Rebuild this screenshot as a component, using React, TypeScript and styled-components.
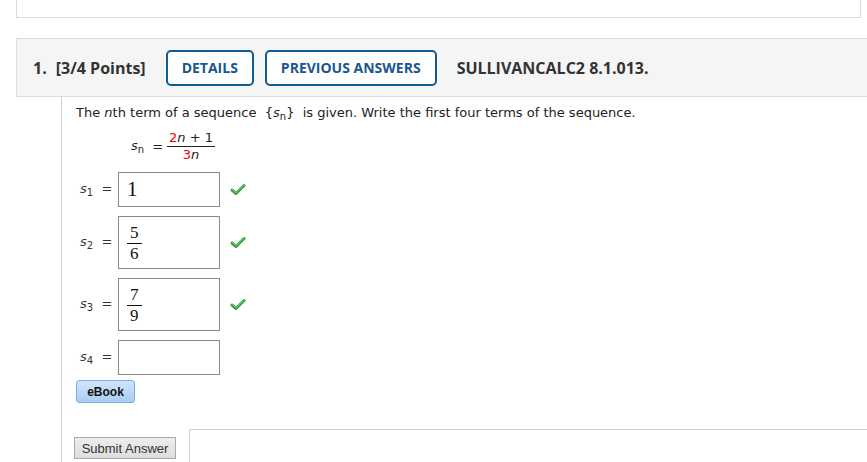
import React from "react";
import styled, { createGlobalStyle } from "styled-components";

const GlobalStyle = createGlobalStyle`
  html, body { margin: 0; padding: 0; background: #fff; }
  body { width: 867px; height: 462px; overflow: hidden; }
`;

const Page = styled.div`
  width: 867px;
  height: 462px;
  overflow: hidden;
  font-family: "DejaVu Sans", Verdana, sans-serif;
  color: #222;
`;

const PrevCard = styled.div`
  height: 17px;
  margin: 0 6px 0 16px;
  border: 1px solid #dcdcdc;
  border-top: none;
`;

const Question = styled.div`
  margin: 20px 0 0 16px;
`;

const Header = styled.div`
  height: 57px;
  display: flex;
  align-items: center;
  background: #f5f5f5;
  border: 1px solid #dcdcdc;
  border-right: none;
  padding-left: 16px;
  font-family: "Open Sans", sans-serif;
  font-weight: 700;
  font-size: 16px;
  color: #333;
`;

const Num = styled.span`
  margin-right: 9px;
`;

const Points = styled.span`
  margin-right: 20px;
`;

const OutlineButton = styled.button`
  height: 36px;
  padding: 0 14px;
  margin-right: 11px;
  border: 2px solid #0f5c97;
  border-radius: 5px;
  background: #fff;
  color: #1a5690;
  font-family: "Open Sans", sans-serif;
  font-weight: 700;
  font-size: 14px;
`;

const Code = styled.span`
  margin-left: 9px;
`;

const Body = styled.div`
  margin-left: 45px;
  border-left: 1px solid #cfcfcf;
  padding: 7px 0 0 14px;
  height: 370px;
`;

const Prompt = styled.p`
  margin: 0;
  font-size: 13px;
  line-height: 18px;
`;

const Sub = styled.sub`
  font-size: 10px;
  vertical-align: -3px;
  font-style: normal;
`;

const Formula = styled.div`
  display: flex;
  align-items: center;
  margin: 4px 0 0 55px;
  font-size: 13px;
`;

const Eq = styled.span`
  margin: 0 4px 0 8px;
`;

const MathFrac = styled.span`
  display: inline-flex;
  flex-direction: column;
  align-items: center;
`;

const FracTop = styled.span`
  padding: 0 2px 1px;
  border-bottom: 1px solid #222;
  line-height: 15px;
`;

const FracBottom = styled.span`
  line-height: 16px;
`;

const Red = styled.span`
  color: #ee0000;
`;

const Answers = styled.div`
  display: grid;
  grid-template-columns: 38px 102px 30px;
  row-gap: 9px;
  margin: 9px 0 0 4px;
  align-items: center;
`;

const Label = styled.span`
  font-size: 13px;
  color: #333;
  white-space: nowrap;
`;

const Box = styled.div<{ $tall?: boolean }>`
  height: ${(p) => (p.$tall ? 51 : 33)}px;
  border: 1px solid #8a8a8a;
  display: flex;
  align-items: center;
  padding-left: 8px;
  font-family: "Liberation Serif", "Times New Roman", serif;
  font-size: 21px;
  color: #111;
`;

const BoxFrac = styled.span`
  display: inline-flex;
  flex-direction: column;
  align-items: center;
  font-size: 17px;
  line-height: 19px;
`;

const BoxTop = styled.span`
  padding: 0 3px 1px;
  border-bottom: 1px solid #111;
`;

const Check = styled.svg`
  margin-left: 10px;
  display: block;
`;

const EBook = styled.button`
  display: block;
  margin-top: 5px;
  height: 23px;
  width: 59px;
  padding: 0;
  border: 1px solid #7eaee0;
  border-radius: 3px;
  background: linear-gradient(#cfe4fb, #a9cdf4);
  font-family: "Liberation Sans", Arial, sans-serif;
  font-weight: 700;
  font-size: 12px;
  color: #111;
`;

const SubmitRow = styled.div`
  display: flex;
  align-items: flex-start;
  margin: 26px 0 0 -2px;
`;

const Submit = styled.button`
  margin-top: 8px;
  height: 22px;
  width: 102px;
  padding: 0;
  border: 1px solid #a9a9a9;
  background: linear-gradient(#ededed, #dedede);
  font-family: "Liberation Sans", Arial, sans-serif;
  font-size: 13px;
  color: #333;
`;

const Feedback = styled.div`
  flex: 1;
  height: 40px;
  margin-left: 13px;
  border-top: 1px solid #cfcfcf;
  border-left: 1px solid #cfcfcf;
`;

const CheckMark = () => (
  <Check width="16" height="13" viewBox="0 0 16 13">
    <path d="M2 7 L6 10.5 L14 2.5" fill="none" stroke="#35a043" strokeWidth="3" strokeLinecap="round" strokeLinejoin="round" />
    <path d="M2.5 6.6 L6 9.6 L13.5 2.4" fill="none" stroke="#72d47c" strokeWidth="1" strokeLinecap="round" strokeLinejoin="round" />
  </Check>
);

const S = ({ n }: { n: string }) => (
  <>
    <i>s</i>
    <Sub>{n}</Sub>
  </>
);

const answers = [
  { n: "1", value: "1", ok: true },
  { n: "2", frac: ["5", "6"], ok: true },
  { n: "3", frac: ["7", "9"], ok: true },
  { n: "4", value: "", ok: false },
];

export default function App() {
  return (
    <Page>
      <GlobalStyle />
      <PrevCard />
      <Question>
        <Header>
          <Num>1.</Num>
          <Points>[3/4 Points]</Points>
          <OutlineButton>DETAILS</OutlineButton>
          <OutlineButton>PREVIOUS ANSWERS</OutlineButton>
          <Code>SULLIVANCALC2 8.1.013.</Code>
        </Header>
        <Body>
          <Prompt>
            The <i>n</i>th term of a sequence &nbsp;{"{"}
            <S n="n" />
            {"}"}&nbsp; is given. Write the first four terms of the sequence.
          </Prompt>
          <Formula>
            <span>
              <S n="n" />
            </span>
            <Eq>=</Eq>
            <MathFrac>
              <FracTop>
                <Red>2</Red>
                <i>n</i> + 1
              </FracTop>
              <FracBottom>
                <Red>3</Red>
                <i>n</i>
              </FracBottom>
            </MathFrac>
          </Formula>
          <Answers>
            {answers.map((a) => (
              <React.Fragment key={a.n}>
                <Label>
                  <S n={a.n} /> &nbsp;=
                </Label>
                <Box $tall={!!a.frac}>
                  {a.frac ? (
                    <BoxFrac>
                      <BoxTop>{a.frac[0]}</BoxTop>
                      <span>{a.frac[1]}</span>
                    </BoxFrac>
                  ) : (
                    a.value
                  )}
                </Box>
                <span>{a.ok && <CheckMark />}</span>
              </React.Fragment>
            ))}
          </Answers>
          <EBook>eBook</EBook>
          <SubmitRow>
            <Submit>Submit Answer</Submit>
            <Feedback />
          </SubmitRow>
        </Body>
      </Question>
    </Page>
  );
}
